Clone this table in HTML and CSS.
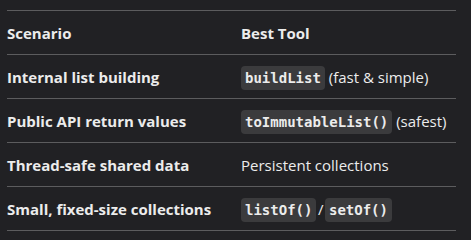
FILE: index.html
```html
<!DOCTYPE html>
<html lang="en">
<head>
<meta charset="utf-8">
<title>Scenarios</title>
<link rel="stylesheet" href="styles.css">
</head>
<body>
<table class="tbl">
  <thead>
    <tr><th class="c1">Scenario</th><th>Best Tool</th></tr>
  </thead>
  <tbody>
    <tr><td class="c1">Internal list building</td><td><code>buildList</code> (fast &amp; simple)</td></tr>
    <tr><td class="c1">Public API return values</td><td><code>toImmutableList()</code> (safest)</td></tr>
    <tr><td class="c1">Thread-safe shared data</td><td>Persistent collections</td></tr>
    <tr><td class="c1">Small, fixed-size collections</td><td><code>listOf()</code><span class="sep">/</span><code>setOf()</code></td></tr>
  </tbody>
</table>
</body>
</html>
```
FILE: styles.css
```css
html, body {
  margin: 0;
  background: #212124;
}
body {
  padding: 10px 10px 0 7px;
  font-family: "Open Sans", "Noto Sans", sans-serif;
  font-size: 15px;
  color: #ececec;
}
.tbl {
  width: 449px;
  border-collapse: separate;
  border-spacing: 0;
}
.tbl th, .tbl td {
  box-sizing: content-box;
  height: 43px;
  padding: 0;
  text-align: left;
  vertical-align: middle;
  font-weight: 400;
  border-bottom: 1px solid #5c5c5e;
}
.tbl th {
  border-top: 1px solid #5c5c5e;
}
.tbl th, .tbl td.c1 {
  font-weight: 700;
}
.c1 {
  width: 234px;
}
code {
  font-family: "DejaVu Sans Mono", monospace;
  font-size: 14px;
  font-weight: 700;
  background: #3b3b3d;
  border-radius: 4px;
  padding: 4px 4px;
}
.sep {
  margin: 0 1.5px;
}
```
